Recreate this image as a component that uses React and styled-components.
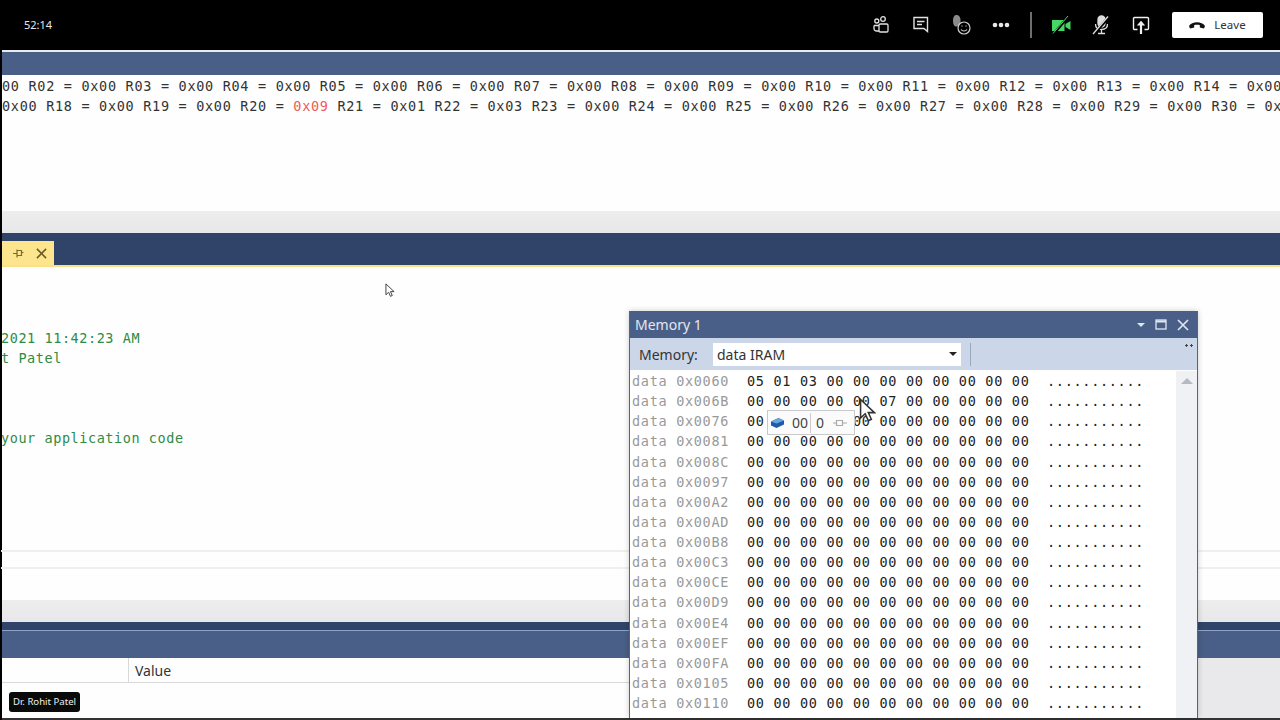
import React from "react"
import styled, { createGlobalStyle } from "styled-components"

const GlobalStyle = createGlobalStyle`
  html, body {
    margin: 0;
    padding: 0;
    background: #000;
  }
`

const Screen = styled.div`
  position: relative;
  width: 1280px;
  height: 720px;
  overflow: hidden;
  display: flex;
  flex-direction: column;
  background: #000;
  font-family: "Noto Sans", "Open Sans", sans-serif;
`

const TopBar = styled.div`
  height: 49px;
  flex: none;
  display: flex;
  align-items: center;
  padding: 0 17px 0 24px;
  color: #fff;
  border-bottom: 1px solid #000;
`

const Clock = styled.span`
  font-size: 11px;
  margin-right: auto;
  color: #e8e8e8;
`

const IconSlot = styled.div`
  width: 40px;
  height: 26px;
  display: flex;
  align-items: center;
  justify-content: center;
`

const Divider = styled.div`
  width: 2px;
  height: 26px;
  background: #6f6f6f;
  margin: 0 9px;
`

const LeaveButton = styled.div`
  width: 91px;
  height: 26px;
  margin-left: 11px;
  background: #fff;
  border-radius: 2px;
  display: flex;
  align-items: center;
  justify-content: center;
  gap: 9px;
  color: #333;
  font-size: 11.5px;
`

const Body = styled.div`
  flex: 1;
  margin-left: 2px;
  display: flex;
  flex-direction: column;
  background: #fefefe;
  min-height: 0;
  border-top: 2px solid #e9e9ee;
  border-bottom: 2px solid #333;
`

const BlueBand = styled.div`
  height: ${(p) => p.$h}px;
  flex: none;
  background: #4a5f87;
`

const Registers = styled.div`
  height: 136px;
  flex: none;
  box-sizing: border-box;
  padding-top: 1px;
  overflow: hidden;
`

const MonoLine = styled.div`
  height: 20.1px;
  line-height: 20.1px;
  font-family: "DejaVu Sans Mono", "Liberation Mono", monospace;
  font-size: 13.5px;
  letter-spacing: ${(p) => (p.$tight ? "0.57px" : "0.7px")};
  white-space: pre;
  color: ${(p) => p.$color || "#333"};
`

const Changed = styled.span`
  color: #ee5a5a;
`

const GrayBand = styled.div`
  height: 22px;
  flex: none;
  background: linear-gradient(#ededed, #e8e7ea);
`

const TabStrip = styled.div`
  height: 32px;
  flex: none;
  background: #2f4468;
  border-bottom: 2px solid #fbe08a;
  display: flex;
  align-items: flex-end;
`

const PinnedTab = styled.div`
  width: 52px;
  height: 24px;
  background: #fde58d;
  display: flex;
  align-items: center;
  gap: 12px;
  padding-left: 11px;
  box-sizing: border-box;
`

const Editor = styled.div`
  height: 333px;
  flex: none;
  box-sizing: border-box;
  padding-top: 61px;
  margin-left: -1px;
  overflow: hidden;
  display: flex;
  flex-direction: column;
`

const Rule = styled.div`
  height: 2px;
  flex: none;
  background: #efefef;
  margin-top: ${(p) => p.$top}px;
`

const NavyStrip = styled.div`
  height: 8px;
  flex: none;
  background: #2f4468;
  border-bottom: 1px solid #8fa3c7;
`

const Lower = styled.div`
  flex: 1;
  display: flex;
  min-height: 0;
`

const LowerMain = styled.div`
  flex: 1;
  display: flex;
  flex-direction: column;
`

const LowerSide = styled.div`
  width: 280px;
  flex: none;
  background: #e9e9ec;
`

const HeaderRow = styled.div`
  height: 24px;
  flex: none;
  display: flex;
  align-items: stretch;
  border-bottom: 1px solid #d8d8d8;
`

const HeaderCell = styled.div`
  width: 126px;
  padding-left: 6px;
  border-left: 1px solid #d8d8d8;
  margin-left: 126px;
  color: #333;
  font-size: 14px;
  line-height: 25px;
`

const Footer = styled.div`
  flex: 1;
  padding: 9px 0 0 7px;
`

const NameTag = styled.div`
  width: 71px;
  height: 20px;
  background: #0a0a0a;
  color: #eee;
  border-radius: 3px;
  font-size: 9.6px;
  line-height: 20px;
  text-align: center;
  white-space: nowrap;
`

const MemoryWindow = styled.div`
  position: absolute;
  left: 629px;
  top: 311px;
  width: 569px;
  height: 407px;
  background: #fff;
  box-shadow: 0 0 6px rgba(0, 0, 0, 0.2);
  border-left: 1px solid #5b6270;
  border-right: 1px solid #5b6270;
  box-sizing: border-box;
  display: flex;
  flex-direction: column;
  overflow: hidden;
`

const TitleBar = styled.div`
  height: 27px;
  flex: none;
  background: #4a5f87;
  display: flex;
  align-items: center;
  padding: 0 8px 0 5px;
  color: #e3e8f2;
  font-size: 14px;
`

const TitleText = styled.span`
  margin-right: auto;
`

const TitleButtons = styled.div`
  display: flex;
  align-items: center;
  gap: 10px;
`

const ToolRow = styled.div`
  height: 32px;
  flex: none;
  background: #ccd6e9;
  display: flex;
  align-items: center;
  padding-left: 9px;
  position: relative;
  font-size: 14px;
  color: #333;
`

const ToolLabel = styled.span`
  width: 74px;
`

const Combo = styled.div`
  width: 248px;
  height: 23px;
  box-sizing: border-box;
  background: #fff;
  display: flex;
  align-items: center;
  justify-content: space-between;
  padding: 0 4px 0 4px;
`

const Caret = styled.div`
  width: 0;
  height: 0;
  border-left: 4px solid transparent;
  border-right: 4px solid transparent;
  border-top: 4px solid ${(p) => p.$color || "#222"};
`

const ToolSep = styled.div`
  width: 1px;
  height: 23px;
  background: #9aa7bd;
  margin-left: 9px;
`

const Grip = styled.div`
  position: absolute;
  right: 4px;
  top: 6px;
  width: 8px;
  height: 3px;
  background: radial-gradient(circle at 1.5px 1.5px, #444 1.2px, transparent 1.4px) 0 0 / 5px 3px repeat-x;
`

const MemoryBody = styled.div`
  flex: 1;
  display: flex;
  min-height: 0;
  padding-top: 1px;
`

const MemoryRows = styled.div`
  flex: 1;
  padding: 0 0 0 2px;
  min-width: 0;
`

const MemoryRow = styled.div`
  display: flex;
  height: 20.125px;
  line-height: 20.125px;
  font-family: "DejaVu Sans Mono", "Liberation Mono", monospace;
  font-size: 13.5px;
  letter-spacing: 0.7px;
  white-space: pre;
`

const Address = styled.span`
  width: 115px;
  color: #999;
`

const HexBytes = styled.span`
  width: 300px;
  color: #222;
`

const Ascii = styled.span`
  color: #222;
`

const ScrollTrack = styled.div`
  width: 21px;
  flex: none;
  background: #f0f1f4;
  display: flex;
  justify-content: center;
  padding-top: 7px;
  box-sizing: border-box;
`

const ScrollArrow = styled.div`
  width: 0;
  height: 0;
  border-left: 6px solid transparent;
  border-right: 6px solid transparent;
  border-bottom: 6px solid #b4bac4;
`

const DataTip = styled.div`
  position: absolute;
  left: 767px;
  top: 410px;
  width: 88px;
  height: 25px;
  box-sizing: border-box;
  background: #fbfbfb;
  border: 1px solid #c9c9c9;
  display: flex;
  align-items: center;
  padding-left: 2px;
  color: #444;
  font-size: 14px;
`

const TipValue = styled.span`
  width: ${(p) => p.$w}px;
  box-sizing: border-box;
  padding-right: ${(p) => (p.$line ? "2px" : "0")};
  text-align: ${(p) => (p.$line ? "right" : "center")};
  border-right: ${(p) => (p.$line ? "1px solid #ccc" : "none")};
  line-height: 20px;
  margin-right: ${(p) => (p.$line ? "0" : "4px")};
`

const CursorBox = styled.div`
  position: absolute;
  left: ${(p) => p.$x}px;
  top: ${(p) => p.$y}px;
  line-height: 0;
`

const regNames = (from, to) => {
  let out = ""
  for (let i = from; i <= to; i++) {
    out += `R${String(i).padStart(2, "0")} = 0x00 `
  }
  return out
}

const hexRows = [
  ["0060", "05 01 03 00 00 00 00 00 00 00 00"],
  ["006B", "00 00 00 00 00 07 00 00 00 00 00"],
  ["0076"],
  ["0081"],
  ["008C"],
  ["0097"],
  ["00A2"],
  ["00AD"],
  ["00B8"],
  ["00C3"],
  ["00CE"],
  ["00D9"],
  ["00E4"],
  ["00EF"],
  ["00FA"],
  ["0105"],
  ["0110"],
]

const Participants = () => (
  <svg width="16" height="17" viewBox="0 0 16 17" fill="none" stroke="#e2e2e2" strokeWidth="1.3">
    <circle cx="3.800" cy="5" r="2" />
    <circle cx="10" cy="3" r="2.300" />
    <path d="M1 9.500h5M1 9.500v3a2.500 2.500 0 0 0 2.500 2.500H6" />
    <rect x="6" y="8" width="9" height="8" rx="1.200" />
  </svg>
)

const Chat = () => (
  <svg width="16" height="17" viewBox="0 0 16 17" fill="none" stroke="#e2e2e2" strokeWidth="1.4">
    <path d="M1 1.500h13.500v14l-3.500-3H1z" />
    <path d="M4 5.500h7.500M4 8.500h5" />
  </svg>
)

const Reactions = () => (
  <svg width="20" height="22" viewBox="0 0 20 22">
    <path d="M2 6.500c0-3 1-5.500 3.500-5.500S9.500 3 9.500 6v3l-3 3.500H5C3 12.500 2 10 2 6.500z" fill="#8a8a8a" />
    <circle cx="13" cy="14" r="6" fill="#000" stroke="#d0d0d0" strokeWidth="1.200" />
    <path d="M10 15.500c1.500 2 4.500 2 6 0M11 11.500v1M15 11.500v1" fill="none" stroke="#d0d0d0" strokeWidth="1.200" />
  </svg>
)

const More = () => (
  <svg width="18" height="6" viewBox="0 0 18 6" fill="#e8e8e8">
    <circle cx="3" cy="3" r="2.300" />
    <circle cx="9" cy="3" r="2.300" />
    <circle cx="15" cy="3" r="2.300" />
  </svg>
)

const VideoOff = () => (
  <svg width="19" height="18" viewBox="0 0 19 18" fill="#46d664">
    <path d="M0 4h12.500v11H0zM13.500 8 18.500 5v9l-5-3z" />
    <path d="M1.500 18 16.500 0.500" stroke="#000" strokeWidth="2.600" />
    <path d="M1 17.500 16 0" stroke="#46d664" strokeWidth="1" />
  </svg>
)

const MicOff = () => (
  <svg width="18" height="20" viewBox="0 0 18 20" fill="none" stroke="#ddd" strokeWidth="1.300">
    <rect x="6" y="1" width="7" height="11" rx="3.500" fill="#ddd" />
    <path d="M3.500 9c0 3.500 2.500 5.500 6 5.500s6-2 6-5.500M9.500 14.500V18M6 18.500h7" />
    <path d="M2 19 16 3" stroke="#000" strokeWidth="3" />
    <path d="M1 19 16 1.500" />
  </svg>
)

const Share = () => (
  <svg width="18" height="18" viewBox="0 0 18 18" fill="none" stroke="#f0f0f0" strokeWidth="1.400">
    <path d="M5.500 13.500H2.500a1 1 0 0 1-1-1V2.500a1 1 0 0 1 1-1h13a1 1 0 0 1 1 1v10a1 1 0 0 1-1 1h-3" />
    <path d="M9 18V7" strokeWidth="2.200" />
    <path d="M4.800 9.500 9 4.800l4.200 4.700z" fill="#f0f0f0" stroke="none" />
  </svg>
)

const Hangup = () => (
  <svg width="16" height="8" viewBox="0 0 16 8" fill="#111">
    <path d="M0 5C3 0 13 0 16 5L15 7.500 10.800 6.500V4C9 3.600 7 3.600 5.200 4V6.500L1 7.500z" />
  </svg>
)

const Pin = () => (
  <svg width="11" height="9" viewBox="0 0 11 9" fill="none" stroke="#7c6a2e" strokeWidth="1.200">
    <path d="M0 4.500h3.500M4 1.500h4.500v5H4zM4 .5v8M8.500 3.500h2" />
  </svg>
)

const Close = ({ color, size }) => (
  <svg width={size} height={size} viewBox="0 0 12 12" fill="none" stroke={color} strokeWidth="1.700">
    <path d="M1 1l10 10M11 1 1 11" />
  </svg>
)

const Arrow = ({ size }) => (
  <svg width={size} height={size * 1.45} viewBox="0 0 11 16" fill="#fff" stroke="#333" strokeWidth="1">
    <path d="M1 1v12l3-2.800 2 4.500 2-.9-2-4.300h4z" />
  </svg>
)

const App = () => (
  <Screen>
    <GlobalStyle />
    <TopBar>
      <Clock>52:14</Clock>
      <IconSlot><Participants /></IconSlot>
      <IconSlot><Chat /></IconSlot>
      <IconSlot><Reactions /></IconSlot>
      <IconSlot><More /></IconSlot>
      <Divider />
      <IconSlot><VideoOff /></IconSlot>
      <IconSlot><MicOff /></IconSlot>
      <IconSlot><Share /></IconSlot>
      <LeaveButton><Hangup />Leave</LeaveButton>
    </TopBar>
    <Body>
      <BlueBand $h={23} />
      <Registers>
        <MonoLine>{"00 " + regNames(2, 15)}</MonoLine>
        <MonoLine>
          {"0x00 " + regNames(18, 19) + "R20 = "}
          <Changed>0x09</Changed>
          {" R21 = 0x01 R22 = 0x03 " + regNames(23, 31)}
        </MonoLine>
      </Registers>
      <GrayBand />
      <TabStrip>
        <PinnedTab>
          <Pin />
          <Close color="#6b5c2a" size={11} />
        </PinnedTab>
      </TabStrip>
      <Editor>
        <MonoLine $tight $color="#2e8b45">2021 11:42:23 AM</MonoLine>
        <MonoLine $tight $color="#2e8b45">t Patel</MonoLine>
        <MonoLine />
        <MonoLine />
        <MonoLine />
        <MonoLine $tight $color="#2e8b45">your application code</MonoLine>
        <Rule $top={101} />
        <Rule $top={15} />
      </Editor>
      <GrayBand />
      <NavyStrip />
      <BlueBand $h={27} />
      <Lower>
        <LowerMain>
          <HeaderRow>
            <HeaderCell>Value</HeaderCell>
          </HeaderRow>
          <Footer>
            <NameTag>Dr. Rohit Patel</NameTag>
          </Footer>
        </LowerMain>
        <LowerSide />
      </Lower>
    </Body>

    <MemoryWindow>
      <TitleBar>
        <TitleText>Memory 1</TitleText>
        <TitleButtons>
          <Caret $color="#dfe6f2" />
          <svg width="12" height="11" viewBox="0 0 12 11" fill="none" stroke="#dfe6f2" strokeWidth="1.300">
            <rect x="1" y="1" width="10" height="9" />
            <path d="M1 2.500h10" strokeWidth="2" />
          </svg>
          <Close color="#dfe6f2" size={12} />
        </TitleButtons>
      </TitleBar>
      <ToolRow>
        <ToolLabel>Memory:</ToolLabel>
        <Combo>
          data IRAM
          <Caret />
        </Combo>
        <ToolSep />
        <Grip />
      </ToolRow>
      <MemoryBody>
        <MemoryRows>
          {hexRows.map(([addr, bytes]) => (
            <MemoryRow key={addr}>
              <Address>data 0x{addr}</Address>
              <HexBytes>{bytes || "00 00 00 00 00 00 00 00 00 00 00"}</HexBytes>
              <Ascii>...........</Ascii>
            </MemoryRow>
          ))}
        </MemoryRows>
        <ScrollTrack>
          <ScrollArrow />
        </ScrollTrack>
      </MemoryBody>
    </MemoryWindow>

    <DataTip>
      <svg width="15" height="12" viewBox="0 0 15 12">
        <path d="M1 4.500 8.500 1l5.500 2.500v4L6.500 11 1 8.500z" fill="#1d5aa8" />
        <path d="M1 4.500 8.500 1l5.500 2.500-7.500 3z" fill="#6aa5e0" />
      </svg>
      <TipValue $w={26} $line>00</TipValue>
      <TipValue $w={18}>0</TipValue>
      <svg width="14" height="8" viewBox="0 0 14 8" fill="none" stroke="#aaa" strokeWidth="1.200">
        <path d="M0 4h3M3.500 1.500h6v5h-6zM10 4h4" />
      </svg>
    </DataTip>

    <CursorBox $x={859} $y={398}>
      <Arrow size={17} />
    </CursorBox>
    <CursorBox $x={385} $y={283}>
      <Arrow size={10} />
    </CursorBox>
  </Screen>
)

export default App
